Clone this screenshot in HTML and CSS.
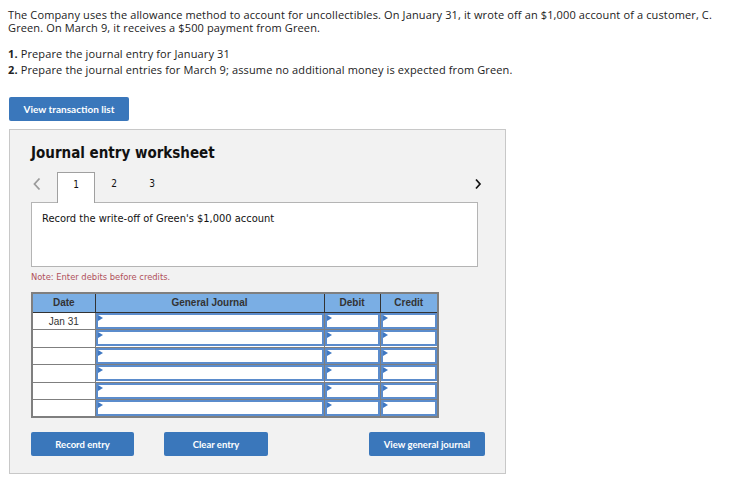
FILE: index.html
```html
<!DOCTYPE html>
<html lang="en">
<head>
    <meta charset="UTF-8">
    <title>Journal entry worksheet</title>
    <link rel="stylesheet" href="styles.css">
</head>
<body>
    <div class="question">
        <p class="intro">The Company uses the allowance method to account for uncollectibles. On January 31, it wrote off an $1,000 account of a customer, C. Green. On March 9, it receives a $500 payment from Green.</p>
        <ol class="tasks">
            <li><b>1.</b> Prepare the journal entry for January 31</li>
            <li><b>2.</b> Prepare the journal entries for March 9; assume no additional money is expected from Green.</li>
        </ol>
        <button class="btn btn-list">View transaction list</button>
    </div>

    <div class="worksheet">
        <h2>Journal entry worksheet</h2>

        <div class="tabs">
            <span class="arrow prev">
                <svg width="10" height="14" viewBox="0 0 10 14"><path d="M7.5 1.5 L2.5 7 L7.5 12.5" fill="none" stroke="#9b9b9b" stroke-width="1.8"/></svg>
            </span>
            <span class="tab active">1</span>
            <span class="tab">2</span>
            <span class="tab">3</span>
            <span class="arrow next">
                <svg width="8" height="12" viewBox="0 0 8 12"><path d="M2 1.5 L6 6 L2 10.5" fill="none" stroke="#111" stroke-width="1.7"/></svg>
            </span>
        </div>
        <div class="tab-body">Record the write-off of Green's $1,000 account</div>

        <p class="note">Note: Enter debits before credits.</p>

        <table class="journal">
            <thead>
                <tr>
                    <th class="col-date">Date</th>
                    <th class="col-gj">General Journal</th>
                    <th class="col-debit">Debit</th>
                    <th class="col-credit">Credit</th>
                </tr>
            </thead>
            <tbody>
                <tr>
                    <td class="date">Jan 31</td>
                    <td class="inp"><div class="field"></div></td>
                    <td class="inp"><div class="field"></div></td>
                    <td class="inp"><div class="field"></div></td>
                </tr>
                <tr>
                    <td class="date"></td>
                    <td class="inp"><div class="field"></div></td>
                    <td class="inp"><div class="field"></div></td>
                    <td class="inp"><div class="field"></div></td>
                </tr>
                <tr>
                    <td class="date"></td>
                    <td class="inp"><div class="field"></div></td>
                    <td class="inp"><div class="field"></div></td>
                    <td class="inp"><div class="field"></div></td>
                </tr>
                <tr>
                    <td class="date"></td>
                    <td class="inp"><div class="field"></div></td>
                    <td class="inp"><div class="field"></div></td>
                    <td class="inp"><div class="field"></div></td>
                </tr>
                <tr>
                    <td class="date"></td>
                    <td class="inp"><div class="field"></div></td>
                    <td class="inp"><div class="field"></div></td>
                    <td class="inp"><div class="field"></div></td>
                </tr>
                <tr>
                    <td class="date"></td>
                    <td class="inp"><div class="field"></div></td>
                    <td class="inp"><div class="field"></div></td>
                    <td class="inp"><div class="field"></div></td>
                </tr>
            </tbody>
        </table>

        <div class="actions">
            <button class="btn btn-record">Record entry</button>
            <button class="btn btn-clear">Clear entry</button>
            <button class="btn btn-view">View general journal</button>
        </div>
    </div>
</body>
</html>
```

FILE: styles.css
```css
* {
    margin: 0;
    padding: 0;
    box-sizing: border-box;
}

body {
    background-color: #fff;
    color: #222;
    font-family: 'Open Sans', 'Liberation Sans', sans-serif;
    padding: 9px 8px 0 8px;
}

.intro {
    font-size: 11px;
    letter-spacing: 0.13px;
    line-height: 12.5px;
    width: 728px;
}

.tasks {
    list-style: none;
    font-size: 11px;
    letter-spacing: 0.13px;
    line-height: 15.5px;
    margin-top: 12px;
}

.btn {
    flex-shrink: 0;
    background-color: #3a77bb;
    color: #fff;
    border: none;
    border-radius: 2px;
    font-family: 'Lato', 'Liberation Sans', sans-serif;
    font-weight: bold;
    font-size: 9.5px;
    height: 24px;
    cursor: pointer;
    white-space: nowrap;
}

.btn-list {
    display: block;
    width: 120px;
    margin: 20px 0 0 1px;
    font-size: 10px;
}

.worksheet {
    margin: 8px 0 0 1px;
    width: 497px;
    background-color: #f2f2f2;
    border: 1px solid #c8c8c8;
    padding: 12px 27px 17px 21px;
}

.worksheet h2 {
    font-family: 'DejaVu Sans Condensed', 'DejaVu Sans', sans-serif;
    font-size: 15px;
    font-weight: bold;
    color: #111;
    line-height: 20px;
    margin-top: 1px;
}

.tabs {
    display: flex;
    align-items: stretch;
    height: 30px;
    margin-top: 9px;
    font-family: 'DejaVu Sans Condensed', 'DejaVu Sans', sans-serif;
    font-size: 10px;
    color: #111;
}

.arrow {
    display: flex;
    align-items: flex-start;
    padding-top: 5px;
}

.prev {
    width: 26px;
    padding-left: 1px;
}

.next {
    margin-left: auto;
    margin-right: -4px;
    padding-top: 6px;
}

.tab {
    width: 38px;
    text-align: center;
    line-height: 24px;
}

.tab.active {
    background-color: #fff;
    border: 1px solid #a0a0a0;
    border-bottom: none;
    margin-bottom: -1px;
    position: relative;
    z-index: 1;
    height: 31px;
}

.tab-body {
    height: 65px;
    background-color: #fff;
    border: 1px solid #b4b4b4;
    padding: 9px 10px;
    font-family: 'DejaVu Sans Condensed', 'DejaVu Sans', sans-serif;
    font-size: 11px;
    color: #111;
}

.note {
    font-family: 'DejaVu Sans Condensed', 'DejaVu Sans', sans-serif;
    font-size: 9.3px;
    color: #b0505a;
    margin-top: 4px;
    line-height: 12px;
}

.journal {
    margin-top: 9px;
    border-collapse: collapse;
    border: 2px solid #7f7f7f;
    width: 406px;
    table-layout: fixed;
    font-family: 'Liberation Sans', Arial, sans-serif;
    font-size: 10px;
    color: #333;
}

.journal th {
    background-color: #7aaee4;
    border: 1px solid #333;
    height: 19px;
    font-weight: bold;
    font-size: 10px;
}

.col-date { width: 63px; }
.col-gj { width: 229px; }
.col-debit { width: 56px; }
.col-credit { width: 58px; }

.journal td {
    border: 1px solid #7f7f7f;
    height: 17.5px;
    padding: 0;
    background-color: #fff;
}

.journal td.date {
    text-align: center;
    vertical-align: top;
    padding-top: 3px;
}

.field {
    position: relative;
    height: 16px;
    border: 2px solid #5b8ccc;
    background-color: #fff;
}

.field::before {
    content: '';
    position: absolute;
    top: 0;
    left: 0;
    border-top: 3px solid transparent;
    border-bottom: 3px solid transparent;
    border-left: 5px solid #3f78c2;
}

.actions {
    display: flex;
    margin-top: 14px;
}

.btn-record {
    width: 103px;
}

.btn-clear {
    width: 104px;
    margin-left: 30px;
}

.btn-view {
    width: 116px;
    margin-left: 101px;
}
```
